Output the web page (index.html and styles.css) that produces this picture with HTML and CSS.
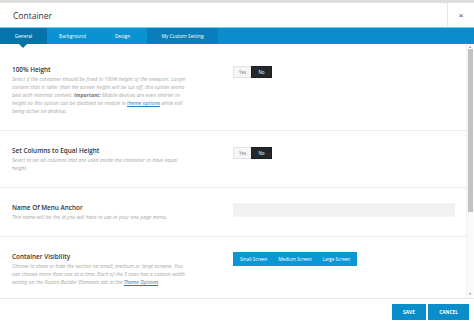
FILE: index.html
```html
<!DOCTYPE html>
<html lang="en">
<head>
    <meta charset="UTF-8">
    <title>Container</title>
    <link rel="stylesheet" href="styles.css">
</head>
<body>
    <div class="modal">
        <div class="modal-header">
            <h1 class="modal-title">Container</h1>
            <button class="close-btn">&times;</button>
        </div>
        <nav class="tabs">
            <a class="tab active">General</a>
            <a class="tab light">Background</a>
            <a class="tab light">Design</a>
            <a class="tab dark">My Custom Setting</a>
        </nav>
        <div class="modal-body">
            <div class="options">
                <div class="option first">
                    <div class="option-text">
                        <h3>100% Height</h3>
                        <p>Select if the container should be fixed to 100% height of the viewport. Larger<br>
                        content that is taller than the screen height will be cut off, this option works<br>
                        best with minimal content. <strong>Important:</strong> Mobile devices are even shorter in<br>
                        height so this option can be disabled on mobile in <a href="#">theme options</a> while still<br>
                        being active on desktop.</p>
                    </div>
                    <div class="toggle">
                        <span class="yes">Yes</span>
                        <span class="no">No</span>
                    </div>
                </div>
                <div class="option">
                    <div class="option-text">
                        <h3>Set Columns to Equal Height</h3>
                        <p>Select to set all columns that are used inside the container to have equal<br>
                        height.</p>
                    </div>
                    <div class="toggle">
                        <span class="yes">Yes</span>
                        <span class="no">No</span>
                    </div>
                </div>
                <div class="option">
                    <div class="option-text">
                        <h3>Name Of Menu Anchor</h3>
                        <p>This name will be the id you will have to use in your one page menu.</p>
                    </div>
                    <div class="text-input"></div>
                </div>
                <div class="option">
                    <div class="option-text">
                        <h3>Container Visibility</h3>
                        <p>Choose to show or hide the section on small, medium or large screens. You<br>
                        can choose more than one at a time. Each of the 3 sizes has a custom width<br>
                        setting on the Fusion Builder Elements tab in the <a href="#">Theme Options</a>.</p>
                    </div>
                    <div class="visibility">
                        <span>Small Screen</span>
                        <span>Medium Screen</span>
                        <span>Large Screen</span>
                    </div>
                </div>
            </div>
            <div class="scrollbar">
                <span class="arrow">&#9652;</span>
                <div class="track"><div class="thumb"></div></div>
                <span class="arrow">&#9662;</span>
            </div>
        </div>
        <div class="modal-footer">
            <button class="btn">SAVE</button>
            <button class="btn">CANCEL</button>
        </div>
    </div>
</body>
</html>
```

FILE: styles.css
```css
body {
    margin: 0;
    padding: 0;
    background-color: #ffffff;
    font-family: 'Open Sans', 'Liberation Sans', sans-serif;
    color: #333333;
}
.modal {
    width: 474px;
    height: 324px;
    display: flex;
    flex-direction: column;
    border-top: 3px solid #dedede;
    box-sizing: border-box;
    overflow: hidden;
}
.modal-header {
    height: 24px;
    display: flex;
    align-items: center;
    justify-content: space-between;
    border-bottom: 1px solid #6ccaf0;
}
.modal-title {
    margin: 0 0 0 13px;
    font-size: 8.5px;
    font-weight: 400;
    color: #333333;
}
.close-btn {
    width: 27px;
    height: 24px;
    border: none;
    border-left: 1px solid #e6e6e6;
    background: none;
    padding: 0;
    font-size: 8px;
    color: #444444;
    font-family: 'Liberation Sans', sans-serif;
}
.tabs {
    height: 16px;
    display: flex;
    background-color: #0a8dc8;
}
.tab {
    position: relative;
    display: flex;
    align-items: center;
    justify-content: center;
    color: #ffffff;
    font-size: 4.8px;
}
.tab.active {
    width: 47px;
    background-color: #0673aa;
}
.tab.active::after {
    content: "";
    position: absolute;
    left: 19px;
    bottom: -4px;
    border-left: 4px solid transparent;
    border-right: 4px solid transparent;
    border-top: 4px solid #0673aa;
}
.tab.light {
    width: 51px;
    background-color: #0a93d0;
}
.tab.light + .tab.light {
    width: 49px;
}
.tab.dark {
    width: 71px;
    background-color: #087fbb;
}
.modal-body {
    flex: 1;
    display: flex;
    min-height: 0;
}
.options {
    flex: 1;
    padding-top: 6px;
}
.option {
    display: grid;
    grid-template-columns: 221px 1fr;
    align-items: start;
    padding: 15px 11px 15px 12px;
    border-bottom: 1px solid #ececec;
}
.option:last-child {
    border-bottom: none;
}
.option h3 {
    margin: 0;
    font-size: 6.4px;
    line-height: 10px;
    font-weight: 600;
    color: #333333;
}
.option p {
    margin: 0;
    font-size: 5.2px;
    line-height: 8px;
    font-style: italic;
    color: #a8a8a8;
    white-space: nowrap;
}
.option p strong {
    color: #777777;
}
.option p a {
    color: #2a7ab8;
    text-decoration: underline;
}
.toggle {
    display: flex;
    height: 12px;
    margin-top: 1px;
}
.toggle span {
    display: flex;
    align-items: center;
    justify-content: center;
    font-size: 4.5px;
}
.toggle .yes {
    width: 17px;
    background-color: #f6f6f6;
    border: 1px solid #e3e3e3;
    border-right: none;
    color: #777777;
}
.toggle .no {
    width: 19px;
    background-color: #23282d;
    color: #ffffff;
    border: 1px solid #1b1f23;
}
.text-input {
    height: 14px;
    background-color: #f1f1f1;
    border: 1px solid #f3f3f3;
    box-sizing: border-box;
}
.visibility {
    display: flex;
    width: 124px;
    height: 14px;
    background-color: #0c97d3;
}
.visibility span {
    flex: 1;
    display: flex;
    align-items: center;
    justify-content: center;
    color: #ffffff;
    font-size: 4.6px;
}
.scrollbar {
    width: 6px;
    margin-right: 1px;
    padding-bottom: 2px;
    display: flex;
    flex-direction: column;
    align-items: center;
    border-left: 1px solid #f0f0f0;
    background-color: #fafafa;
}
.arrow {
    font-size: 4px;
    line-height: 5px;
    color: #888888;
}
.track {
    flex: 1;
    width: 5px;
}
.thumb {
    height: 163px;
    background-color: #c2c2c2;
}
.modal-footer {
    height: 26px;
    display: flex;
    justify-content: flex-end;
    align-items: flex-start;
    gap: 2px;
    padding: 5px 5px 0 0;
    border-top: 1px solid #e6e6e6;
    box-sizing: border-box;
}
.btn {
    height: 16px;
    padding: 0;
    border: none;
    background-color: #0a8dc8;
    color: #ffffff;
    font-family: 'Open Sans', sans-serif;
    font-weight: 700;
    font-size: 4.8px;
}
.btn:first-child {
    width: 34px;
}
.btn:last-child {
    width: 41px;
}
```
